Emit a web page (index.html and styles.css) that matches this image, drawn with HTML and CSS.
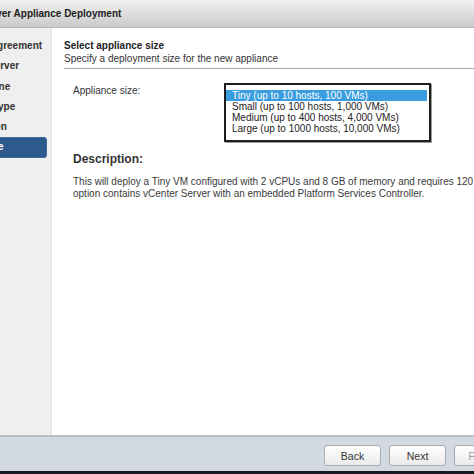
FILE: index.html
```html
<!DOCTYPE html>
<html lang="en">
<head>
    <meta charset="UTF-8">
    <title>vCenter Server Appliance Deployment</title>
    <link rel="stylesheet" href="styles.css">
</head>
<body>
    <div class="window">
        <div class="titlebar">vCenter Server Appliance Deployment</div>

        <div class="content">
            <ul class="steps">
                <li>End User License Agreement</li>
                <li>Connect to target server</li>
                <li>Set up virtual machine</li>
                <li>Select deployment type</li>
                <li>Set up Single Sign-on</li>
                <li class="active">Select appliance size</li>
            </ul>

            <div class="main">
                <div class="page-head">
                    <div class="page-title">Select appliance size</div>
                    <div class="page-sub">Specify a deployment size for the new appliance</div>
                </div>

                <div class="field">
                    <div class="field-label">Appliance size:</div>
                    <ul class="listbox">
                        <li class="selected">Tiny (up to 10 hosts, 100 VMs)</li>
                        <li>Small (up to 100 hosts, 1,000 VMs)</li>
                        <li>Medium (up to 400 hosts, 4,000 VMs)</li>
                        <li>Large (up to 1000 hosts, 10,000 VMs)</li>
                    </ul>
                </div>

                <h2 class="desc-title">Description:</h2>
                <p class="desc">This will deploy a Tiny VM configured with 2 vCPUs and 8 GB of memory and requires 120 GB of disk space. This<br>option contains vCenter Server with an embedded Platform Services Controller.</p>
            </div>
        </div>

        <div class="footer">
            <button>Back</button>
            <button>Next</button>
            <button disabled>Finish</button>
            <button>Cancel</button>
        </div>
    </div>
</body>
</html>
```

FILE: styles.css
```css
html, body {
    margin: 0;
    height: 100%;
    overflow: hidden;
    background: #ffffff;
}
body {
    font-family: "Liberation Sans", Arial, sans-serif;
    font-size: 10px;
    color: #333;
}
.window {
    width: 700px;
    height: 474px;
    margin-left: -105px;
    display: flex;
    flex-direction: column;
    border-bottom: 3px solid #17181e;
    box-sizing: border-box;
}
.titlebar {
    height: 27px;
    line-height: 27px;
    padding-left: 45px;
    font-weight: bold;
    color: #222;
    background: linear-gradient(#f1f1f1, #cacaca);
    border-bottom: 1px solid #b4b4b4;
}
.content {
    flex: 1;
    display: flex;
}
.steps {
    list-style: none;
    margin: 0;
    padding: 8px 0 0;
    width: 156px;
    background: #efefef;
    border-right: 1px solid #e2e2e2;
}
.steps li {
    height: 20.25px;
    line-height: 20px;
    margin: 0 4px;
    padding-left: 4.5px;
    font-weight: bold;
    color: #333;
    white-space: nowrap;
}
.steps li.active {
    background: #2c5a8c;
    color: #fff;
    border-radius: 4px;
    box-shadow: inset 0 0 0 1px #3d6a9a;
}
.main {
    flex: 1;
    padding: 11px 0 0 12px;
}
.page-head {
    line-height: 13px;
    padding-bottom: 3px;
    border-bottom: 1px solid #a9a9a9;
}
.page-title {
    font-weight: bold;
    color: #222;
}
.page-sub {
    color: #333;
}
.field {
    display: flex;
    margin-top: 14px;
    padding-left: 9px;
}
.field-label {
    width: 151px;
    padding-top: 2px;
    line-height: 12px;
}
.listbox {
    list-style: none;
    margin: 0;
    width: 207px;
    box-sizing: border-box;
    padding: 4.5px 2px 6px 0;
    border: 2px solid #1e1e1e;
    box-shadow: 1px 1px 0 #9a9a9a;
}
.listbox li {
    line-height: 11.2px;
    padding-left: 6px;
    color: #222;
    white-space: nowrap;
}
.listbox li.selected {
    background: #3a9de0;
    color: #fff;
}
.desc-title {
    margin: 10px 0 0 9px;
    font-size: 12px;
    line-height: 14px;
    color: #333;
}
.desc {
    margin: 10px 0 0 9px;
    line-height: 12px;
    color: #3a3a3a;
    white-space: nowrap;
}
.footer {
    height: 36px;
    box-sizing: border-box;
    display: flex;
    justify-content: flex-end;
    gap: 8px;
    padding: 8px 19px 0 0;
    background: #d3d9e1;
    border-top: 2px solid #b9bec5;
}
.footer button {
    width: 57px;
    height: 21px;
    font-family: "Liberation Sans", Arial, sans-serif;
    font-size: 10.5px;
    color: #333;
    background: linear-gradient(#fefefe, #ebebeb);
    border: 1px solid #a8abb0;
    border-radius: 3px;
}
.footer button:disabled {
    color: #a0a0a0;
}
```
